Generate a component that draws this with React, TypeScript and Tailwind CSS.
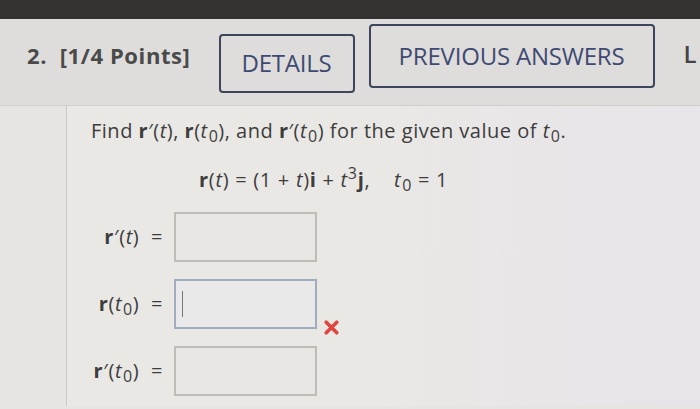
import React from 'react';

const Sub: React.FC<{ children: React.ReactNode }> = ({ children }) => (
  <sub className="text-[0.8em] relative top-[0.25em] ml-[1px]">{children}</sub>
);

const T: React.FC = () => <i className="font-normal">t</i>;

const App: React.FC = () => {
  const rows = [
    { key: 'rp', label: <><b>r</b>′(<T />)</>, active: false, wrong: false },
    { key: 'r0', label: <><b>r</b>(<T /><Sub>0</Sub>)</>, active: true, wrong: true },
    { key: 'rp0', label: <><b>r</b>′(<T /><Sub>0</Sub>)</>, active: false, wrong: false },
  ];

  return (
    <div className="w-[700px] h-[409px] overflow-hidden bg-[#e6e5e1] font-['Open_Sans',sans-serif] text-[#3d3d3d]">
      {/* top dark strip */}
      <div className="h-[19px] bg-[#333231]" />

      {/* Header */}
      <div className="h-[87px] bg-[#dedddb] border-b border-[#cfcfcc] flex items-center pl-[27px]">
        <span className="-mt-[14px] text-[22px] font-bold text-[#4a4a4a] tracking-[0.6px]">2.&nbsp; [1/4 Points]</span>
        <button className="ml-[28px] mt-[2px] w-[136px] h-[59px] border-2 border-[#3d455c] rounded-[4px] text-[24px] text-[#3e4a73] tracking-[-0.2px]">
          DETAILS
        </button>
        <button className="ml-[14px] -mt-[12px] w-[286px] h-[64px] border-2 border-[#3d455c] rounded-[4px] text-[24px] text-[#3e4a73] tracking-[-0.2px]">
          PREVIOUS ANSWERS
        </button>
        <span className="ml-[29px] -mt-[16px] text-[24px] font-semibold text-[#444]">L</span>
      </div>

      {/* Content */}
      <div className="ml-[66px] border-l border-[#c9c9c6] h-[300px] pl-[24px] pt-[10px] bg-gradient-to-r from-[#e9e8e5] via-[#e9e8e5] to-[#e8e4ea] text-[20px] tracking-[0.5px]">
        <p className="leading-[30px]">
          Find <b>r</b>′(<T />), <b>r</b>(<T /><Sub>0</Sub>), and <b>r</b>′(<T /><Sub>0</Sub>) for the given value of <T /><Sub>0</Sub>.
        </p>
        <p className="leading-[30px] mt-[19px] pl-[108px] tracking-[0.7px]">
          <b>r</b>(<T />) = (1 + <T />)<b>i</b> + <T /><sup className="text-[0.8em]">3</sup><b>j</b>,&nbsp;&nbsp;&nbsp;&nbsp;<T /><Sub>0</Sub> = 1
        </p>

        <div className="mt-[17px] -ml-[8px] flex flex-col gap-[17px]">
          {rows.map((r) => (
            <div key={r.key} className="flex items-center">
              <div className="w-[80px] text-right whitespace-nowrap tracking-[0.6px]">
                {r.label}&nbsp;&nbsp;=
              </div>
              <div
                className={`ml-[11px] w-[143px] h-[50px] border-2 flex items-center pl-[6px] ${
                  r.active ? 'border-[#a3abc0] bg-[#e9e9ea]' : 'border-[#bdbcb7] bg-[#e7e6e3]'
                }`}
              >
                {r.active && <span className="w-[1px] h-[26px] bg-[#777]" />}
              </div>
              {r.wrong && (
                <svg className="ml-[6px] self-end -mb-[7px]" width="17" height="17" viewBox="0 0 16 16">
                  <path d="M3 3 L13 13 M13 3 L3 13" stroke="#e0453f" strokeWidth="3.4" strokeLinecap="round" />
                </svg>
              )}
            </div>
          ))}
        </div>
      </div>
    </div>
  );
};

export default App;
